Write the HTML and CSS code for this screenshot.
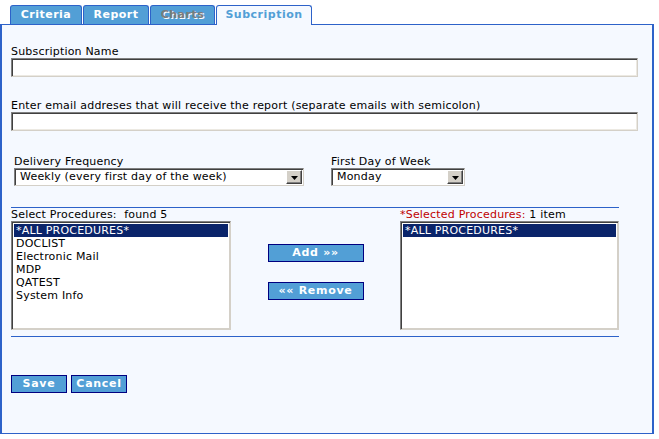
FILE: index.html
```html
<!DOCTYPE html>
<html>
<head>
<meta charset="utf-8">
<link rel="stylesheet" href="styles.css">
</head>
<body>
<div class="tabs">
  <div class="tab tab-criteria">Criteria</div>
  <div class="tab tab-report">Report</div>
  <div class="tab tab-charts tab-disabled">Charts</div>
  <div class="tab tab-sub tab-active">Subcription</div>
</div>
<div class="panel">
  <div class="field">
    <div class="lbl">Subscription Name</div>
    <div class="textbox"></div>
  </div>
  <div class="field field-email">
    <div class="lbl">Enter email addreses that will receive the report (separate emails with semicolon)</div>
    <div class="textbox"></div>
  </div>
  <div class="freq-row">
    <div class="freq-col">
      <div class="lbl">Delivery Frequency</div>
      <div class="select select-freq">
        <span class="select-text">Weekly (every first day of the week)</span>
        <span class="select-btn"><svg width="7" height="4" viewBox="0 0 7 4"><path d="M0 0H7L3.5 4Z" fill="#000"/></svg></span>
      </div>
    </div>
    <div class="day-col">
      <div class="lbl">First Day of Week</div>
      <div class="select select-day">
        <span class="select-text">Monday</span>
        <span class="select-btn"><svg width="7" height="4" viewBox="0 0 7 4"><path d="M0 0H7L3.5 4Z" fill="#000"/></svg></span>
      </div>
    </div>
  </div>
  <div class="rule"></div>
  <div class="procs">
    <div class="proc-col proc-left">
      <div class="lbl">Select Procedures:&nbsp; found 5</div>
      <div class="listbox">
        <div class="opt opt-sel">*ALL PROCEDURES*</div>
        <div class="opt">DOCLIST</div>
        <div class="opt">Electronic Mail</div>
        <div class="opt">MDP</div>
        <div class="opt">QATEST</div>
        <div class="opt">System Info</div>
      </div>
    </div>
    <div class="proc-actions">
      <div class="btn btn-wide">Add &raquo;&raquo;</div>
      <div class="btn btn-wide">&laquo;&laquo; Remove</div>
    </div>
    <div class="proc-col proc-right">
      <div class="lbl"><span class="req">*Selected Procedures:</span> 1 item</div>
      <div class="listbox">
        <div class="opt opt-sel">*ALL PROCEDURES*</div>
      </div>
    </div>
  </div>
  <div class="rule rule-bottom"></div>
  <div class="form-actions">
    <div class="btn btn-small">Save</div>
    <div class="btn btn-small">Cancel</div>
  </div>
</div>
</body>
</html>
```
FILE: styles.css
```css
html, body {
  margin: 0;
  padding: 0;
  background: #ffffff;
}
body {
  font-family: "DejaVu Sans", Verdana, sans-serif;
  font-size: 11px;
  line-height: 13px;
  letter-spacing: 0.2px;
  color: #000;
}
.tabs {
  display: flex;
  align-items: flex-end;
  gap: 1px;
  padding: 5px 0 0 10px;
  height: 19px;
}
.tab {
  box-sizing: border-box;
  height: 19px;
  background: #529fd6;
  border: 1px solid #2d62c9;
  border-bottom: none;
  border-radius: 3px 3px 0 0;
  color: #ffffff;
  font-weight: bold;
  font-size: 11px;
  line-height: 18px;
  text-align: center;
  letter-spacing: 0.5px;
}
.tab-criteria { width: 72px; }
.tab-report { width: 66px; }
.tab-charts { width: 65px; }
.tab-sub { width: 96px; }
.tab-disabled {
  color: #7c7c7c;
  text-shadow: 1px 1px 0 #ffffff;
}
.tab-active {
  height: 20px;
  margin-bottom: -1px;
  position: relative;
  z-index: 1;
  background: #f5f9ff;
  color: #529fd6;
}
.panel {
  box-sizing: border-box;
  width: 654px;
  height: 410px;
  background: #f5f9ff;
  border: 1px solid #2d62c9;
  border-left-width: 2px;
  border-right-width: 2px;
  padding: 20px 0 0 9px;
}
.lbl {
  height: 13px;
  white-space: nowrap;
}
.textbox {
  box-sizing: border-box;
  width: 627px;
  height: 19px;
  background: #ffffff;
  border: 1px solid;
  border-color: #808080 #d4d0c8 #d4d0c8 #808080;
  box-shadow: inset 1px 1px 0 #404040, inset -1px -1px 0 #ece9e2;
}
.field-email {
  margin-top: 22px;
}
.freq-row {
  display: flex;
  margin-top: 24px;
}
.freq-col {
  width: 317px;
  padding-left: 3px;
}
.select {
  box-sizing: border-box;
  height: 18px;
  display: flex;
  align-items: stretch;
  background: #ffffff;
  border: 1px solid;
  border-color: #808080 #d4d0c8 #d4d0c8 #808080;
  box-shadow: inset 1px 1px 0 #404040;
  padding: 1px;
}
.select-freq { width: 290px; }
.select-day { width: 134px; }
.select-text {
  flex: 1;
  padding-left: 4px;
  line-height: 14px;
  white-space: nowrap;
  overflow: hidden;
}
.select-btn {
  box-sizing: border-box;
  width: 16px;
  display: flex;
  align-items: center;
  justify-content: center;
  background: #d4d0c8;
  border: 1px solid;
  border-color: #ffffff #404040 #404040 #ffffff;
  box-shadow: inset -1px -1px 0 #808080;
  padding-top: 1px;
}
.rule {
  width: 608px;
  height: 1px;
  background: #2d62c9;
  margin-top: 21px;
}
.procs {
  display: flex;
  width: 608px;
}
.proc-left { width: 220px; }
.proc-right { width: 219px; }
.listbox {
  box-sizing: border-box;
  height: 109px;
  background: #ffffff;
  border: 1px solid;
  border-color: #808080 #d4d0c8 #d4d0c8 #808080;
  box-shadow: inset 1px 1px 0 #404040, inset -1px -1px 0 #d4d0c8;
  padding: 2px;
}
.opt {
  height: 13px;
  padding-left: 2px;
  white-space: nowrap;
}
.opt-sel {
  background: #0a246a;
  color: #ffffff;
}
.req { color: #c00000; }
.proc-actions {
  width: 169px;
  display: flex;
  flex-direction: column;
  align-items: center;
  gap: 20px;
  padding-top: 36px;
}
.btn {
  box-sizing: border-box;
  height: 18px;
  background: #529fd6;
  border: 1px solid #000080;
  color: #ffffff;
  font-weight: bold;
  font-size: 11px;
  line-height: 16px;
  text-align: center;
  letter-spacing: 0.7px;
}
.btn-wide { width: 96px; }
.btn-small { width: 56px; }
.rule-bottom {
  margin-top: 6px;
}
.form-actions {
  display: flex;
  gap: 4px;
  margin-top: 38px;
}
```
